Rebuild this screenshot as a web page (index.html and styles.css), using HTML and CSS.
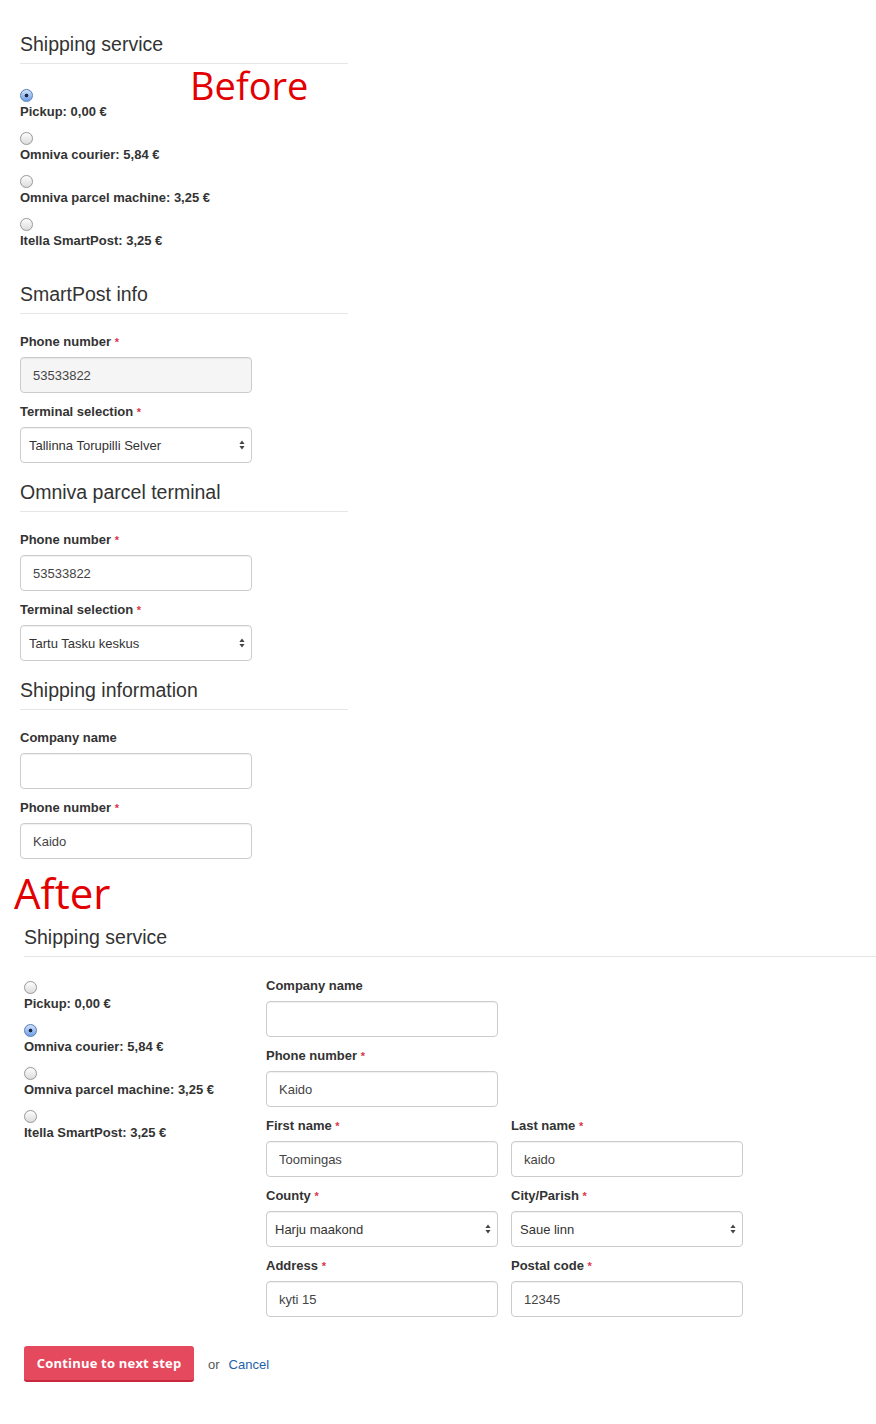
FILE: index.html
```html
<!DOCTYPE html>
<html lang="en">
<head>
  <meta charset="UTF-8" />
  <title>Shipping service</title>
  <link rel="stylesheet" href="styles.css">
</head>
<body>

  <!-- Before -->
  <section class="before">
    <span class="stamp stamp-before">Before</span>
    <h2 class="section-title">Shipping service</h2>
    <div class="radio-list">
      <label class="radio-item"><input type="radio" name="svc1" checked><span>Pickup: 0,00 €</span></label>
      <label class="radio-item"><input type="radio" name="svc1"><span>Omniva courier: 5,84 €</span></label>
      <label class="radio-item"><input type="radio" name="svc1"><span>Omniva parcel machine: 3,25 €</span></label>
      <label class="radio-item"><input type="radio" name="svc1"><span>Itella SmartPost: 3,25 €</span></label>
    </div>

    <h2 class="section-title">SmartPost info</h2>
    <div class="field">
      <label class="field-label">Phone number <em>*</em></label>
      <input class="text-input readonly" type="text" value="53533822">
    </div>
    <div class="field">
      <label class="field-label">Terminal selection <em>*</em></label>
      <div class="select-wrap">
        <select class="select-input"><option>Tallinna Torupilli Selver</option></select>
        <svg class="select-arrows" width="6" height="10" viewBox="0 0 6 10"><path d="M3 0.5 L5.6 4 H0.4 Z M3 9.5 L5.6 6 H0.4 Z" fill="#444"/></svg>
      </div>
    </div>

    <h2 class="section-title">Omniva parcel terminal</h2>
    <div class="field">
      <label class="field-label">Phone number <em>*</em></label>
      <input class="text-input" type="text" value="53533822">
    </div>
    <div class="field">
      <label class="field-label">Terminal selection <em>*</em></label>
      <div class="select-wrap">
        <select class="select-input"><option>Tartu Tasku keskus</option></select>
        <svg class="select-arrows" width="6" height="10" viewBox="0 0 6 10"><path d="M3 0.5 L5.6 4 H0.4 Z M3 9.5 L5.6 6 H0.4 Z" fill="#444"/></svg>
      </div>
    </div>

    <h2 class="section-title">Shipping information</h2>
    <div class="field">
      <label class="field-label">Company name</label>
      <input class="text-input" type="text" value="">
    </div>
    <div class="field">
      <label class="field-label">Phone number <em>*</em></label>
      <input class="text-input" type="text" value="Kaido">
    </div>
  </section>

  <!-- After -->
  <div class="stamp stamp-after">After</div>
  <section class="after">
    <h2 class="section-title wide">Shipping service</h2>
    <div class="after-row">
      <div class="radio-list after-radios">
        <label class="radio-item"><input type="radio" name="svc2"><span>Pickup: 0,00 €</span></label>
        <label class="radio-item"><input type="radio" name="svc2" checked><span>Omniva courier: 5,84 €</span></label>
        <label class="radio-item"><input type="radio" name="svc2"><span>Omniva parcel machine: 3,25 €</span></label>
        <label class="radio-item"><input type="radio" name="svc2"><span>Itella SmartPost: 3,25 €</span></label>
      </div>

      <div class="after-form">
        <div class="field">
          <label class="field-label">Company name</label>
          <input class="text-input" type="text" value="">
        </div>
        <div class="field">
          <label class="field-label">Phone number <em>*</em></label>
          <input class="text-input" type="text" value="Kaido">
        </div>
        <div class="field-grid">
          <div class="field">
            <label class="field-label">First name <em>*</em></label>
            <input class="text-input" type="text" value="Toomingas">
          </div>
          <div class="field">
            <label class="field-label">Last name <em>*</em></label>
            <input class="text-input" type="text" value="kaido">
          </div>
          <div class="field">
            <label class="field-label">County <em>*</em></label>
            <div class="select-wrap">
              <select class="select-input"><option>Harju maakond</option></select>
              <svg class="select-arrows" width="6" height="10" viewBox="0 0 6 10"><path d="M3 0.5 L5.6 4 H0.4 Z M3 9.5 L5.6 6 H0.4 Z" fill="#444"/></svg>
            </div>
          </div>
          <div class="field">
            <label class="field-label">City/Parish <em>*</em></label>
            <div class="select-wrap">
              <select class="select-input"><option>Saue linn</option></select>
              <svg class="select-arrows" width="6" height="10" viewBox="0 0 6 10"><path d="M3 0.5 L5.6 4 H0.4 Z M3 9.5 L5.6 6 H0.4 Z" fill="#444"/></svg>
            </div>
          </div>
          <div class="field">
            <label class="field-label">Address <em>*</em></label>
            <input class="text-input" type="text" value="kyti 15">
          </div>
          <div class="field">
            <label class="field-label">Postal code <em>*</em></label>
            <input class="text-input" type="text" value="12345">
          </div>
        </div>
      </div>
    </div>

    <div class="actions">
      <button class="btn-continue">Continue to next step</button>
      <span class="or">or</span>
      <a class="cancel" href="#">Cancel</a>
    </div>
  </section>

</body>
</html>
```

FILE: styles.css
```css
* { margin: 0; padding: 0; box-sizing: border-box; }

body {
  background: #fff;
  color: #333;
  font-family: 'Liberation Sans', Arial, sans-serif;
  font-size: 13px;
  width: 876px;
}

/* red notes */
.stamp {
  font-family: 'Open Sans', sans-serif;
  color: #e30000;
  font-weight: 400;
}

.stamp-before {
  position: absolute;
  left: 190px;
  top: 63px;
  font-size: 38px;
  line-height: 44px;
}

.stamp-after {
  font-size: 42px;
  line-height: 50px;
  margin-left: 14px;
}

/* sections */
.before {
  width: 348px;
  padding: 33px 0 0 20px;
}

.section-title {
  font-size: 19.5px;
  font-weight: 400;
  line-height: 22px;
  color: #333;
  padding-bottom: 8px;
  border-bottom: 1px solid #e6e6e6;
  margin-bottom: 18px;
}

.before .section-title + .radio-list { margin-top: 25px; }

.field + .section-title { margin-top: 18px; }

/* radios */
.radio-list {
  display: flex;
  flex-direction: column;
  margin-bottom: 22px;
}

.radio-item {
  display: flex;
  flex-direction: column;
  align-items: flex-start;
  margin-bottom: 12px;
  font-weight: 700;
  line-height: 16px;
  gap: 2px;
}

.radio-item input {
  appearance: none;
  -webkit-appearance: none;
  width: 13px;
  height: 13px;
  border-radius: 50%;
  border: 1px solid #9a9a9a;
  background: linear-gradient(#fdfdfd, #dcdcdc);
  box-shadow: 0 0 1px rgba(0,0,0,0.15);
}

.radio-item input:checked {
  border-color: #5a7fb8;
  background: radial-gradient(circle, #1b2a44 0, #1b2a44 1.6px, transparent 2.2px),
              linear-gradient(#cfe2fb, #6f9fe6);
}

/* form fields */
.field {
  display: flex;
  flex-direction: column;
  margin-bottom: 9px;
}

.field-label {
  font-weight: 700;
  line-height: 20px;
  margin-bottom: 5px;
  color: #333;
}

.field-label em {
  font-style: normal;
  color: #e0354a;
  font-size: 11px;
  vertical-align: top;
}

.text-input,
.select-input {
  width: 232px;
  height: 36px;
  border: 1px solid #cccccc;
  border-radius: 4px;
  background: #fff;
  font-family: 'Liberation Sans', Arial, sans-serif;
  font-size: 13px;
  color: #444;
  box-shadow: inset 0 1px 1px rgba(0,0,0,0.06);
  outline: none;
}

.text-input { padding: 0 12px; }

.text-input.readonly { background: #f5f5f5; }

.select-wrap {
  position: relative;
  width: 232px;
}

.select-input {
  appearance: none;
  -webkit-appearance: none;
  padding: 0 8px;
  color: #333;
}

.select-arrows {
  position: absolute;
  right: 7px;
  top: 13px;
  pointer-events: none;
}

/* after */
.after {
  padding-left: 24px;
}

.stamp-after + .after .section-title { margin-top: 8px; }

.after-row {
  display: flex;
}

.after-radios {
  width: 242px;
  margin-top: 6px;
}

.after-form {
  padding-top: 1px;
}

.field-grid {
  display: grid;
  grid-template-columns: 232px 232px;
  column-gap: 13px;
}

.actions {
  display: flex;
  align-items: center;
  margin-top: 20px;
  padding-bottom: 40px;
}

.btn-continue {
  width: 170px;
  height: 36px;
  border: none;
  border-bottom: 2px solid #c7283d;
  border-radius: 3px;
  background: #e5495e;
  color: #fff;
  font-family: 'Open Sans', sans-serif;
  font-weight: 700;
  font-size: 13px;
  letter-spacing: 0.2px;
  cursor: pointer;
}

.or {
  margin-left: 14px;
  color: #555;
}

.cancel {
  margin-left: 9px;
  color: #1f5fa8;
  text-decoration: none;
}
```
